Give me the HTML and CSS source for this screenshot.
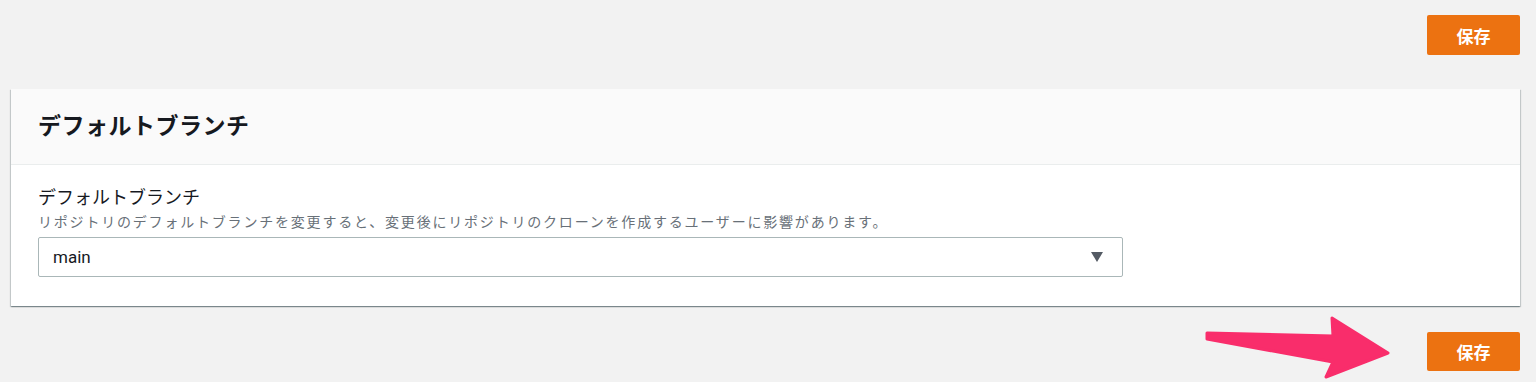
FILE: index.html
```html
<!DOCTYPE html>
<html lang="ja">
<head>
    <meta charset="UTF-8">
    <meta name="viewport" content="width=device-width, initial-scale=1.0">
    <title>デフォルトブランチ</title>
    <link rel="stylesheet" href="styles.css">
</head>
<body>
    <div class="page">
        <div class="actions actions-top">
            <button class="button">保存</button>
        </div>

        <div class="card">
            <div class="card-header">
                <h2>デフォルトブランチ</h2>
            </div>
            <div class="card-body">
                <label class="field-label" for="branch">デフォルトブランチ</label>
                <div class="field-desc">リポジトリのデフォルトブランチを変更すると、変更後にリポジトリのクローンを作成するユーザーに影響があります。</div>
                <div class="select">
                    <span id="branch">main</span>
                    <span class="caret"></span>
                </div>
            </div>
        </div>

        <div class="actions actions-bottom">
            <button class="button">保存</button>
        </div>

        <svg class="arrow" width="200" height="72" viewBox="0 0 200 72">
            <path d="M7,23 L133,26 L132,8 L188,43 L126,67 L133,52 L7,29 Z" fill="#f92d6b" stroke="#f92d6b" stroke-width="3" stroke-linejoin="round"/>
        </svg>
    </div>
</body>
</html>
```

FILE: styles.css
```css
:root {
    --orange: #ec7211;
    --background-color: #f2f2f2;
    --text-color: #16191f;
    --muted: #687078;
    --border: #eaeded;
}
* {
    margin: 0;
    padding: 0;
    box-sizing: border-box;
}
body {
    font-family: Roboto, "Noto Sans CJK JP", sans-serif;
    background-color: var(--background-color);
    color: var(--text-color);
}
.page {
    position: relative;
    height: 382px;
    padding: 15px 16px 0 11px;
}
.actions {
    display: flex;
    justify-content: flex-end;
}
.actions-bottom {
    margin-top: 26px;
}
.button {
    width: 93px;
    height: 40px;
    border: none;
    border-radius: 2px;
    background-color: var(--orange);
    color: white;
    font-family: Roboto, "Noto Sans CJK JP", sans-serif;
    font-size: 17px;
    font-weight: bold;
    cursor: pointer;
}
.actions-bottom .button {
    height: 39px;
}
.card {
    margin-top: 34px;
    background-color: white;
    box-shadow: 0 1px 1px 0 rgba(0, 28, 36, 0.3), 1px 1px 1px 0 rgba(0, 28, 36, 0.15), -1px 1px 1px 0 rgba(0, 28, 36, 0.15);
}
.card-header {
    height: 76px;
    display: flex;
    align-items: center;
    padding: 0 27px;
    background-color: #fafafa;
    border-bottom: 1px solid var(--border);
}
.card-header h2 {
    font-size: 23px;
    font-weight: bold;
    line-height: 30px;
    letter-spacing: 0.5px;
}
.card-body {
    padding: 22px 27px 29px;
}
.field-label {
    display: block;
    font-size: 18px;
    line-height: 22px;
}
.field-desc {
    margin-top: 4px;
    font-size: 14px;
    line-height: 18px;
    letter-spacing: 1.8px;
    color: var(--muted);
}
.select {
    margin-top: 6px;
    width: 1085px;
    height: 40px;
    display: flex;
    align-items: center;
    justify-content: space-between;
    padding: 0 19px 0 14px;
    border: 1px solid #aab7b8;
    border-radius: 2px;
    font-size: 17px;
}
.caret {
    width: 0;
    height: 0;
    border-left: 6px solid transparent;
    border-right: 6px solid transparent;
    border-top: 10px solid #545b64;
}
.arrow {
    position: absolute;
    left: 1200px;
    top: 310px;
}
```
